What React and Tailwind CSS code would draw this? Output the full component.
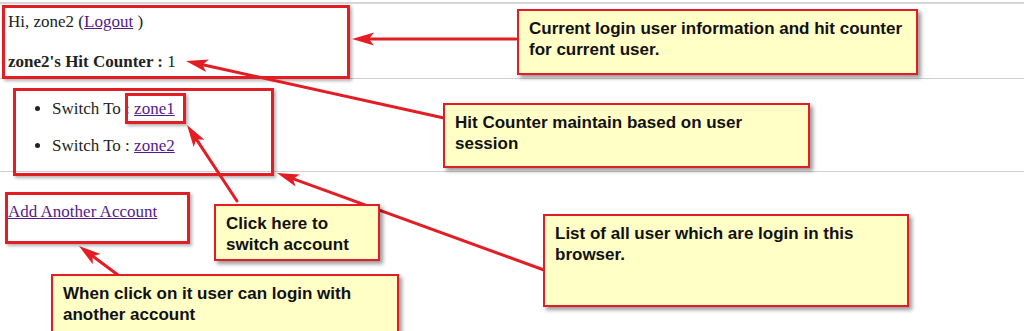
import React from "react";

const RED = "#e21d24";

function Arrow({ x1, y1, x2, y2 }) {
  const dx = x2 - x1;
  const dy = y2 - y1;
  const len = Math.sqrt(dx * dx + dy * dy);
  const ux = dx / len;
  const uy = dy / len;
  const hl = 22;
  const hw = 6.5;
  const bx = x2 - ux * hl;
  const by = y2 - uy * hl;
  const px = -uy;
  const py = ux;
  const pts = `${x2},${y2} ${bx + px * hw},${by + py * hw} ${bx + ux * 5},${by + uy * 5} ${bx - px * hw},${by - py * hw}`;
  return (
    <g>
      <line x1={x1} y1={y1} x2={bx + ux * 6} y2={by + uy * 6} stroke={RED} strokeWidth="3" strokeLinecap="round" />
      <polygon points={pts} fill={RED} />
    </g>
  );
}

function Callout({ className, children }) {
  return (
    <div
      className={`absolute bg-[#ffffc6] border-2 border-[#e21d24] shadow-[3px_3px_4px_rgba(0,0,0,0.4)] pl-[10px] pt-[7px] text-[17px] leading-[21px] font-bold text-[#111] ${className}`}
      style={{ fontFamily: '"Liberation Sans", Arial, sans-serif' }}
    >
      {children}
    </div>
  );
}

function Box({ className }) {
  return (
    <div className={`absolute border-[3px] border-[#e21d24] shadow-[2px_2px_3px_rgba(0,0,0,0.3)] ${className}`} />
  );
}

export default function App() {
  const serif = { fontFamily: '"Liberation Serif", "Times New Roman", serif' };
  return (
    <div className="relative w-[1024px] h-[331px] overflow-hidden bg-white">
      {/* base page */}
      <div className="flex flex-col pt-[2px] text-[17px] leading-[20px] text-[#222]" style={serif}>
        <div className="border-t-2 border-[#d6d6d6]" />
        <div className="flex flex-col gap-[20px] pl-[8px] pt-[8px] pb-[6px]">
          <p className="h-[20px]">
            Hi, zone2 (<a className="text-[#551a8b] underline">Logout</a> )
          </p>
          <p className="h-[20px] font-bold">
            zone2's Hit Counter : <span className="font-normal">1</span>
          </p>
        </div>
        <div className="border-t border-[#cfcfcf]" />
        <ul className="flex flex-col gap-[17px] list-disc pl-[52px] pt-[20px] pb-[15px]">
          <li className="h-[20px]">
            Switch To : <a className="text-[#551a8b] underline">zone1</a>
          </li>
          <li className="h-[20px]">
            Switch To : <a className="text-[#551a8b] underline">zone2</a>
          </li>
        </ul>
        <div className="border-t border-[#cfcfcf]" />
        <div className="pl-[8px] pt-[30px]">
          <a className="text-[#551a8b] underline">Add Another Account</a>
        </div>
      </div>

      {/* red highlight boxes */}
      <Box className="left-[2px] top-[5px] w-[348px] h-[74px]" />
      <Box className="left-[13px] top-[88px] w-[261px] h-[88px]" />
      <Box className="left-[125px] top-[93px] w-[61px] h-[31px]" />
      <Box className="left-[5px] top-[192px] w-[185px] h-[52px]" />

      {/* arrows */}
      <svg className="absolute left-0 top-0" width="1024" height="331" viewBox="0 0 1024 331">
        <Arrow x1={516} y1={39} x2={352} y2={39} />
        <Arrow x1={444} y1={118} x2={186} y2={61} />
        <Arrow x1={237} y1={201} x2={187} y2={125} />
        <Arrow x1={544} y1={270} x2={277} y2={173} />
        <Arrow x1={118} y1={275} x2={79} y2={246} />
      </svg>

      {/* callouts */}
      <Callout className="left-[517px] top-[9px] w-[401px] h-[66px]">
        Current login user information and hit counter
        <br />
        for current user.
      </Callout>
      <Callout className="left-[443px] top-[103px] w-[367px] h-[65px]">
        Hit Counter maintain based on user
        <br />
        session
      </Callout>
      <Callout className="left-[214px] top-[204px] w-[166px] h-[57px]">
        Click here to
        <br />
        switch account
      </Callout>
      <Callout className="left-[51px] top-[274px] w-[348px] h-[70px]">
        When click on it user can login with
        <br />
        another account
      </Callout>
      <Callout className="left-[543px] top-[214px] w-[366px] h-[93px]">
        List of all user which are login in this
        <br />
        browser.
      </Callout>
    </div>
  );
}
